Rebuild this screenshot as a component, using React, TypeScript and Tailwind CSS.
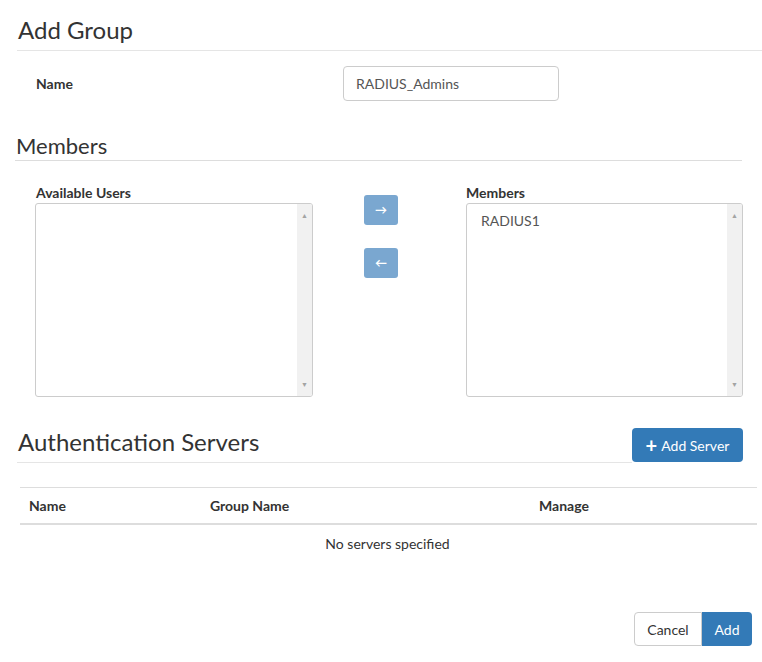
export default function App() {
  const sb = (
    <div className="w-[15px] bg-[#f1f1f1] flex flex-col justify-between items-center py-[8px] text-[#a3a3a3] text-[7px] leading-none">
      <span>▲</span>
      <span>▼</span>
    </div>
  );
  return (
    <div className="w-[762px] h-[662px] bg-white text-[#333] text-[14px] relative" style={{ fontFamily: "Lato, 'Open Sans', sans-serif" }}>
      <div className="pl-[17px] pt-[16px]">
        <h1 className="text-[24px] leading-[28px] pl-[1px] pb-[6px] border-b border-[#e5e5e5]">Add Group</h1>
        <div className="flex items-center h-[34px] mt-[15px]">
          <div className="w-[326px] pl-[19px] font-bold">Name</div>
          <div className="w-[216px] h-[35px] border border-[#ccc] rounded-[4px] flex items-center px-[12px] text-[#555]">RADIUS_Admins</div>
        </div>
      </div>
      <div className="pl-[15px] pt-[33px] w-[742px]">
        <h2 className="text-[22px] leading-[26px] pl-[1px] pb-[1px] border-b border-[#ddd]">Members</h2>
      </div>
      <div className="flex pl-[35px] pt-[23px]">
        <div className="w-[278px]">
          <div className="font-bold leading-[17px] pl-[1px]">Available Users</div>
          <div className="mt-[2px] h-[194px] border border-[#ccc] rounded-[3px] flex justify-end overflow-hidden">{sb}</div>
        </div>
        <div className="w-[153px] flex flex-col items-center pt-[11px] pr-[30px] pl-[13px]">
          <div className="w-[34px] h-[30px] rounded-[3px] bg-[#7aa7d0] text-white flex items-center justify-center text-[12px] font-bold">→</div>
          <div className="w-[34px] h-[30px] rounded-[3px] bg-[#7aa7d0] text-white flex items-center justify-center text-[12px] font-bold mt-[23px]">←</div>
        </div>
        <div className="w-[277px]">
          <div className="font-bold leading-[17px]">Members</div>
          <div className="mt-[2px] h-[194px] border border-[#ccc] rounded-[3px] flex overflow-hidden">
            <div className="flex-1 pl-[14px] pt-[6px] text-[#555]">RADIUS1</div>
            {sb}
          </div>
        </div>
      </div>
      <div className="pl-[17px] pt-[31px] w-[743px] flex items-end border-b-0">
        <h2 className="flex-1 text-[24px] leading-[28px] pl-[1px] pb-[6px] border-b border-[#e5e5e5]">Authentication Servers</h2>
        <div className="w-[111px] h-[34px] bg-[#337ab7] rounded-[4px] text-white flex items-center justify-center gap-[4px] mb-[1px]">
          <span className="text-[20px] leading-none font-bold">+</span>Add Server
        </div>
      </div>
      <div className="ml-[20px] w-[737px] mt-[24px] border-t border-[#ddd]">
        <div className="flex font-bold h-[37px] items-center border-b-2 border-[#ddd]">
          <div className="w-[181px] pl-[9px]">Name</div>
          <div className="w-[329px] pl-[9px]">Group Name</div>
          <div className="pl-[9px]">Manage</div>
        </div>
        <div className="text-center h-[37px] flex items-center justify-center pr-[2px]">No servers specified</div>
      </div>
      <div className="flex justify-end pr-[10px] mt-[50px]">
        <div className="h-[34px] w-[68px] border border-[#ccc] rounded-l-[4px] flex items-center justify-center">Cancel</div>
        <div className="h-[34px] w-[50px] bg-[#337ab7] text-white rounded-r-[4px] flex items-center justify-center">Add</div>
      </div>
    </div>
  );
}
